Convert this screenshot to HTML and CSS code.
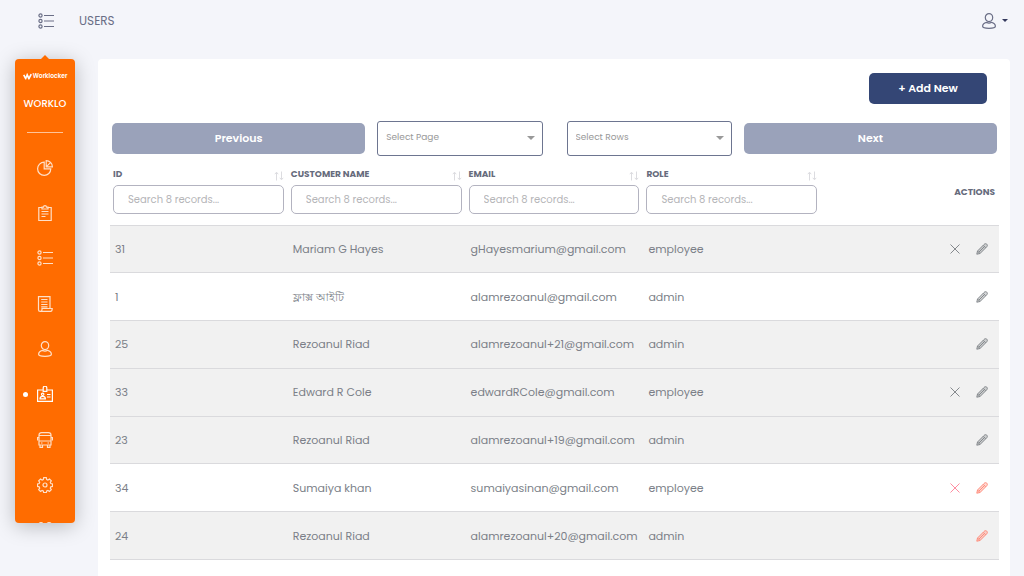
FILE: index.html
```html
<!DOCTYPE html>
<html lang="en">
<head>
    <meta charset="UTF-8">
    <meta name="viewport" content="width=device-width, initial-scale=1">
    <title>Users - Worklocker</title>
    <link rel="stylesheet" href="styles.css">
</head>
<body>
<svg class="sprite" aria-hidden="true">
    <symbol id="i-list" viewBox="0 0 16 16">
        <circle cx="2.5" cy="2.5" r="1.6"/><circle cx="2.5" cy="8" r="1.6"/><circle cx="2.5" cy="13.5" r="1.6"/>
        <path d="M6 2.5h10M6 8h10M6 13.5h10"/>
    </symbol>
    <symbol id="i-user" viewBox="0 0 16 16">
        <ellipse cx="8" cy="4.6" rx="3.7" ry="4"/>
        <path d="M5.500 9.300c-2.500.6-3.900 2-3.900 4 0 1.500 3 2 6.400 2s6.400-.5 6.400-2c0-2-1.400-3.400-3.900-4-1.500 1-3.500 1-5 0z"/>
    </symbol>
    <symbol id="i-pie" viewBox="0 0 16 16">
        <path d="M7.200 2.200a6.600 6.600 0 1 0 6.600 6.600H7.200z"/>
        <path d="M9.200.6v6.200h6.200A6.200 6.200 0 0 0 9.200.6zM9.200 6.800l4.200-4.200"/>
    </symbol>
    <symbol id="i-note" viewBox="0 0 16 16">
        <path d="M5 2.500H1.800v13h12.400v-13H11M5 4V2.200h1.500a1.500 1.500 0 0 1 3 0H11V4zM4.500 6.500h7M4.500 9h7M4.500 11.500h4"/>
    </symbol>
    <symbol id="i-news" viewBox="0 0 16 16">
        <path d="M13 12.500V.6H1.500v13.200c0 1 .6 1.600 1.600 1.600h10.500c1 0 1.600-.8 1.600-2.900H5v1.300c0 1-.6 1.600-1.600 1.600M4.200 3.500h6.300M4.200 6h6.300M4.200 8.500h6.300M4.200 10.800h6.300"/>
    </symbol>
    <symbol id="i-card" viewBox="0 0 16 16">
        <path d="M6 4H.6v11.400h14.800V4H10M6.200 5.400V2a1.800 1.800 0 0 1 3.600 0v3.400zM10 8.500h3.500M10 11h3.500"/>
        <circle cx="5.700" cy="8.300" r="1.200"/>
        <path d="M3 12.800c0-1.600 1-2.500 2.700-2.500s2.700.9 2.700 2.500z"/>
    </symbol>
    <symbol id="i-bus" viewBox="0 0 16 16">
        <path d="M2 13V3C2 1.200 3 .6 4.500.6h7C13 .6 14 1.200 14 3v10zM2 3.500h12M2 9h12M2 5.500H.5v3M14 5.500h1.500v3M3 13v2.400h2.500V13M10.500 13v2.400H13V13M4 11h1.500M10.500 11H12"/>
    </symbol>
    <symbol id="i-gear" viewBox="0 0 16 16">
        <path d="M6.700.6h2.600l.4 1.900 1.200.5 1.600-1 1.800 1.800-1 1.600.5 1.200 1.700.4v2.400l-1.700.4-.5 1.300 1 1.600-1.800 1.800-1.600-1-1.200.5-.4 1.600H6.700l-.4-1.600-1.200-.5-1.600 1-1.800-1.800 1-1.600-.5-1.300-1.700-.4V7l1.700-.4.5-1.200-1-1.600L3.500 2l1.600 1 1.200-.5z"/>
        <circle cx="8" cy="8" r="2"/>
    </symbol>
    <symbol id="i-people" viewBox="0 0 16 16">
        <circle cx="4" cy="3.500" r="2.800"/><circle cx="12" cy="3.500" r="2.800"/>
        <path d="M.6 15c0-5 7-5 7 0M8.400 15c0-5 7-5 7 0"/>
    </symbol>
    <symbol id="i-close" viewBox="0 0 12 12">
        <path d="M1.500 1.500l9 9M10.500 1.500l-9 9"/>
    </symbol>
    <symbol id="i-pencil" viewBox="0 0 12 12">
        <path fill="currentColor" fill-opacity=".35" d="M.8 11.200l.7-3.200L8 1.500C9 .4 10 .5 10.800 1.200S11.600 3 10.500 4L4 10.500z"/>
        <path d="M7.200 2.300l2.500 2.500M1.500 8L4 10.500M2.800 9.200l5.700-5.700"/>
    </symbol>
    <symbol id="i-sort" viewBox="0 0 10 10">
        <path d="M2.500 9.500v-8M.8 3.200l1.700-2 1.700 2M7.500.5v8M5.800 6.800l1.700 2 1.700-2"/>
    </symbol>
</svg>

<header class="topbar">
    <button class="icon-btn menu-toggle" aria-label="Toggle menu"><svg class="icon"><use href="#i-list"/></svg></button>
    <h1 class="page-title">USERS</h1>
    <button class="icon-btn account" aria-label="Account">
        <svg class="icon"><use href="#i-user"/></svg>
        <span class="caret"></span>
    </button>
</header>

<div class="layout">
    <aside class="sidebar">
        <div class="sidebar-scroll">
            <a href="#" class="brand">
                <svg class="brand-mark" viewBox="0 0 12 10"><path d="M0 4l2-1 1.500 3L5.500.5 8 6l2-4 2 1-3.500 6.500h-1.500L5.500 6 4.300 9.500H3z"/></svg>
                <span>Worklocker</span>
            </a>
            <div class="company">WORKLO</div>
            <hr class="divider">
            <nav class="menu">
                <a href="#" aria-label="Dashboard"><svg class="icon"><use href="#i-pie"/></svg></a>
                <a href="#" aria-label="Tasks"><svg class="icon"><use href="#i-note"/></svg></a>
                <a href="#" aria-label="Lists"><svg class="icon"><use href="#i-list"/></svg></a>
                <a href="#" aria-label="Reports"><svg class="icon"><use href="#i-news"/></svg></a>
                <a href="#" aria-label="Customers"><svg class="icon"><use href="#i-user"/></svg></a>
                <a href="#" class="active" aria-label="Users"><svg class="icon"><use href="#i-card"/></svg></a>
                <a href="#" aria-label="Vehicles"><svg class="icon"><use href="#i-bus"/></svg></a>
                <a href="#" aria-label="Settings"><svg class="icon"><use href="#i-gear"/></svg></a>
                <a href="#" aria-label="Teams"><svg class="icon"><use href="#i-people"/></svg></a>
            </nav>
        </div>
    </aside>

    <main class="card">
        <div class="card-head">
            <button class="btn btn-add">+ Add New</button>
        </div>

        <div class="pager">
            <button class="btn btn-page">Previous</button>
            <div class="pager-selects">
                <div class="select-wrap">
                    <select aria-label="Select Page"><option>Select Page</option></select>
                </div>
                <div class="select-wrap">
                    <select aria-label="Select Rows"><option>Select Rows</option></select>
                </div>
            </div>
            <button class="btn btn-page">Next</button>
        </div>

        <table class="users">
            <thead>
            <tr>
                <th>
                    <div class="th-label"><label for="f-id">ID</label><svg class="sort"><use href="#i-sort"/></svg></div>
                    <input type="text" id="f-id" placeholder="Search 8 records...">
                </th>
                <th>
                    <div class="th-label"><label for="f-name">CUSTOMER NAME</label><svg class="sort"><use href="#i-sort"/></svg></div>
                    <input type="text" id="f-name" placeholder="Search 8 records...">
                </th>
                <th>
                    <div class="th-label"><label for="f-email">EMAIL</label><svg class="sort"><use href="#i-sort"/></svg></div>
                    <input type="text" id="f-email" placeholder="Search 8 records...">
                </th>
                <th>
                    <div class="th-label"><label for="f-role">ROLE</label><svg class="sort"><use href="#i-sort"/></svg></div>
                    <input type="text" id="f-role" placeholder="Search 8 records...">
                </th>
                <th class="th-actions">ACTIONS</th>
            </tr>
            </thead>
            <tbody>
            <tr class="shade">
                <td>31</td><td>Mariam G Hayes</td><td>gHayesmarium@gmail.com</td><td>employee</td>
                <td><div class="actions">
                    <button class="icon-btn" aria-label="Delete"><svg class="icon-sm"><use href="#i-close"/></svg></button>
                    <button class="icon-btn" aria-label="Edit"><svg class="icon-sm"><use href="#i-pencil"/></svg></button>
                </div></td>
            </tr>
            <tr>
                <td>1</td><td><div class="name" lang="bn">ফ্লাক্স আইটি</div></td><td>alamrezoanul@gmail.com</td><td>admin</td>
                <td><div class="actions">
                    <button class="icon-btn" aria-label="Edit"><svg class="icon-sm"><use href="#i-pencil"/></svg></button>
                </div></td>
            </tr>
            <tr class="shade">
                <td>25</td><td>Rezoanul Riad</td><td>alamrezoanul+21@gmail.com</td><td>admin</td>
                <td><div class="actions">
                    <button class="icon-btn" aria-label="Edit"><svg class="icon-sm"><use href="#i-pencil"/></svg></button>
                </div></td>
            </tr>
            <tr class="shade">
                <td>33</td><td>Edward R Cole</td><td>edwardRCole@gmail.com</td><td>employee</td>
                <td><div class="actions">
                    <button class="icon-btn" aria-label="Delete"><svg class="icon-sm"><use href="#i-close"/></svg></button>
                    <button class="icon-btn" aria-label="Edit"><svg class="icon-sm"><use href="#i-pencil"/></svg></button>
                </div></td>
            </tr>
            <tr class="shade">
                <td>23</td><td>Rezoanul Riad</td><td>alamrezoanul+19@gmail.com</td><td>admin</td>
                <td><div class="actions">
                    <button class="icon-btn" aria-label="Edit"><svg class="icon-sm"><use href="#i-pencil"/></svg></button>
                </div></td>
            </tr>
            <tr>
                <td>34</td><td>Sumaiya khan</td><td>sumaiyasinan@gmail.com</td><td>employee</td>
                <td><div class="actions hot">
                    <button class="icon-btn delete" aria-label="Delete"><svg class="icon-sm"><use href="#i-close"/></svg></button>
                    <button class="icon-btn" aria-label="Edit"><svg class="icon-sm"><use href="#i-pencil"/></svg></button>
                </div></td>
            </tr>
            <tr class="shade">
                <td>24</td><td>Rezoanul Riad</td><td>alamrezoanul+20@gmail.com</td><td>admin</td>
                <td><div class="actions hot">
                    <button class="icon-btn" aria-label="Edit"><svg class="icon-sm"><use href="#i-pencil"/></svg></button>
                </div></td>
            </tr>
            </tbody>
        </table>
    </main>
</div>
</body>
</html>
```
FILE: styles.css
```css
* {
    box-sizing: border-box;
}
body {
    margin: 0;
    min-height: 100vh;
    display: flex;
    flex-direction: column;
    background: #f4f5fa;
    color: #7b7f88;
    font-family: Poppins, Inter, "Noto Sans", sans-serif;
    font-size: 11px;
}
button, input, select {
    font-family: inherit;
}
a {
    color: inherit;
    text-decoration: none;
}
.sprite {
    display: none;
}
.icon, .icon-sm, .sort {
    display: block;
    width: 16px;
    height: 16px;
    fill: none;
    stroke: currentColor;
    stroke-width: 1.2;
}
.icon-sm {
    width: 12px;
    height: 12px;
    stroke-width: 1;
}
.icon-btn {
    display: flex;
    align-items: center;
    padding: 0;
    border: 0;
    background: none;
    color: inherit;
    cursor: pointer;
}

/* top bar */
.topbar {
    display: flex;
    align-items: center;
    height: 41px;
    padding: 0 16px 0 38px;
    color: #6a6e86;
}
.page-title {
    margin: 0 auto 0 25px;
    font-size: 12px;
    font-weight: 400;
}
.account {
    gap: 5px;
}
.caret {
    border: 3px solid transparent;
    border-top-color: #33385c;
    border-bottom: 0;
}

.layout {
    flex: 1;
    display: flex;
    align-items: flex-start;
    gap: 23px;
    padding: 18px 14px 0 15px;
}

/* sidebar */
.sidebar {
    position: sticky;
    top: 59px;
    flex: none;
    width: 60px;
    height: calc(100vh - 112px);
    border-radius: 4px;
    background: #ff6c00;
    color: #fff;
    box-shadow: 0 3px 20px rgba(0, 0, 0, 0.25);
}
.sidebar::before {
    content: "";
    position: absolute;
    top: -4px;
    left: 26px;
    border: 4px solid transparent;
    border-top: 0;
    border-bottom-color: #ff6c00;
}
.sidebar-scroll {
    height: 100%;
    overflow: hidden;
    border-radius: 4px;
}
.brand {
    display: flex;
    align-items: center;
    justify-content: center;
    gap: 1px;
    height: 34px;
    font-size: 6px;
    font-weight: 600;
}
.brand-mark {
    width: 9px;
    height: 8px;
    fill: #fff;
}
.company {
    height: 39px;
    line-height: 22px;
    font-size: 10px;
    font-weight: 500;
    text-align: center;
}
.divider {
    margin: 0 12px;
    border: 0;
    border-top: 1px solid rgba(255, 255, 255, 0.6);
}
.menu {
    display: grid;
    grid-auto-rows: 1fr;
    height: 408px;
    margin-top: 12px;
}
.menu a {
    position: relative;
    display: flex;
    align-items: center;
    justify-content: center;
    color: #ffe0c8;
}
.menu .active {
    color: #fff;
}
.menu .active::before {
    content: "";
    position: absolute;
    left: 8px;
    width: 5px;
    height: 5px;
    border-radius: 50%;
    background: #fff;
}

/* card */
.card {
    flex: 1;
    align-self: stretch;
    min-width: 0;
    padding: 14px 11px 0 12px;
    border-radius: 4px 4px 0 0;
    background: #fff;
}
.card-head {
    display: flex;
    justify-content: flex-end;
    padding-right: 12px;
}
.btn {
    height: 31px;
    border: 0;
    border-radius: 5px;
    color: #fff;
    font-size: 11px;
    font-weight: 600;
    cursor: pointer;
}
.btn-add {
    width: 118px;
    background: #344675;
}
.btn-page {
    background: #9aa2ba;
}
.pager {
    display: grid;
    grid-template-columns: 5fr 7fr 5fr;
    align-items: center;
    gap: 12px;
    margin: 17px 2px 0;
}
.pager-selects {
    display: flex;
    gap: 24px;
}
.select-wrap {
    position: relative;
    flex: 1;
}
.select-wrap::after {
    content: "";
    position: absolute;
    top: 15px;
    right: 8px;
    border: 4px solid transparent;
    border-top-color: #999;
    border-bottom: 0;
    pointer-events: none;
}
select {
    display: block;
    width: 100%;
    height: 35px;
    padding: 0 24px 3px 8px;
    border: 1px solid #6d7590;
    border-radius: 3px;
    appearance: none;
    background: #fff;
    color: #999;
    font-size: 9px;
}

/* table */
.users {
    width: 100%;
    height: 392px;
    margin-top: 12px;
    border-collapse: collapse;
    table-layout: fixed;
}
.users thead tr {
    height: 57px;
}
.users th {
    padding: 0 4px 10px 3px;
    font-size: 9px;
    font-weight: 700;
    text-align: left;
    color: #666b7c;
}
.users .th-actions {
    padding: 0 4px 8px 0;
    text-align: right;
}
.th-label {
    display: flex;
    justify-content: space-between;
    height: 17px;
    line-height: 12px;
}
.sort {
    width: 10px;
    height: 10px;
    margin-top: 3px;
    color: #dcdce0;
    stroke-width: 1;
}
.users input {
    display: block;
    width: 100%;
    height: 29px;
    padding: 0 14px;
    border: 1px solid #b3b3c0;
    border-radius: 5px;
    font-size: 10px;
}
.users input::placeholder {
    color: #b5b5b8;
}
.users td {
    padding: 0 5px;
    border-top: 1px solid #dadadd;
    border-bottom: 1px solid #dadadd;
    line-height: 16px;
}
.name {
    height: 16px;
}
.shade {
    background: #f1f1f1;
}
.actions {
    display: flex;
    align-items: center;
    justify-content: flex-end;
    gap: 15px;
    height: 16px;
    padding-right: 6px;
    color: #85898d;
}
.actions.hot {
    color: #ff8d7c;
}
.hot .delete {
    color: #ff8da1;
}
```
